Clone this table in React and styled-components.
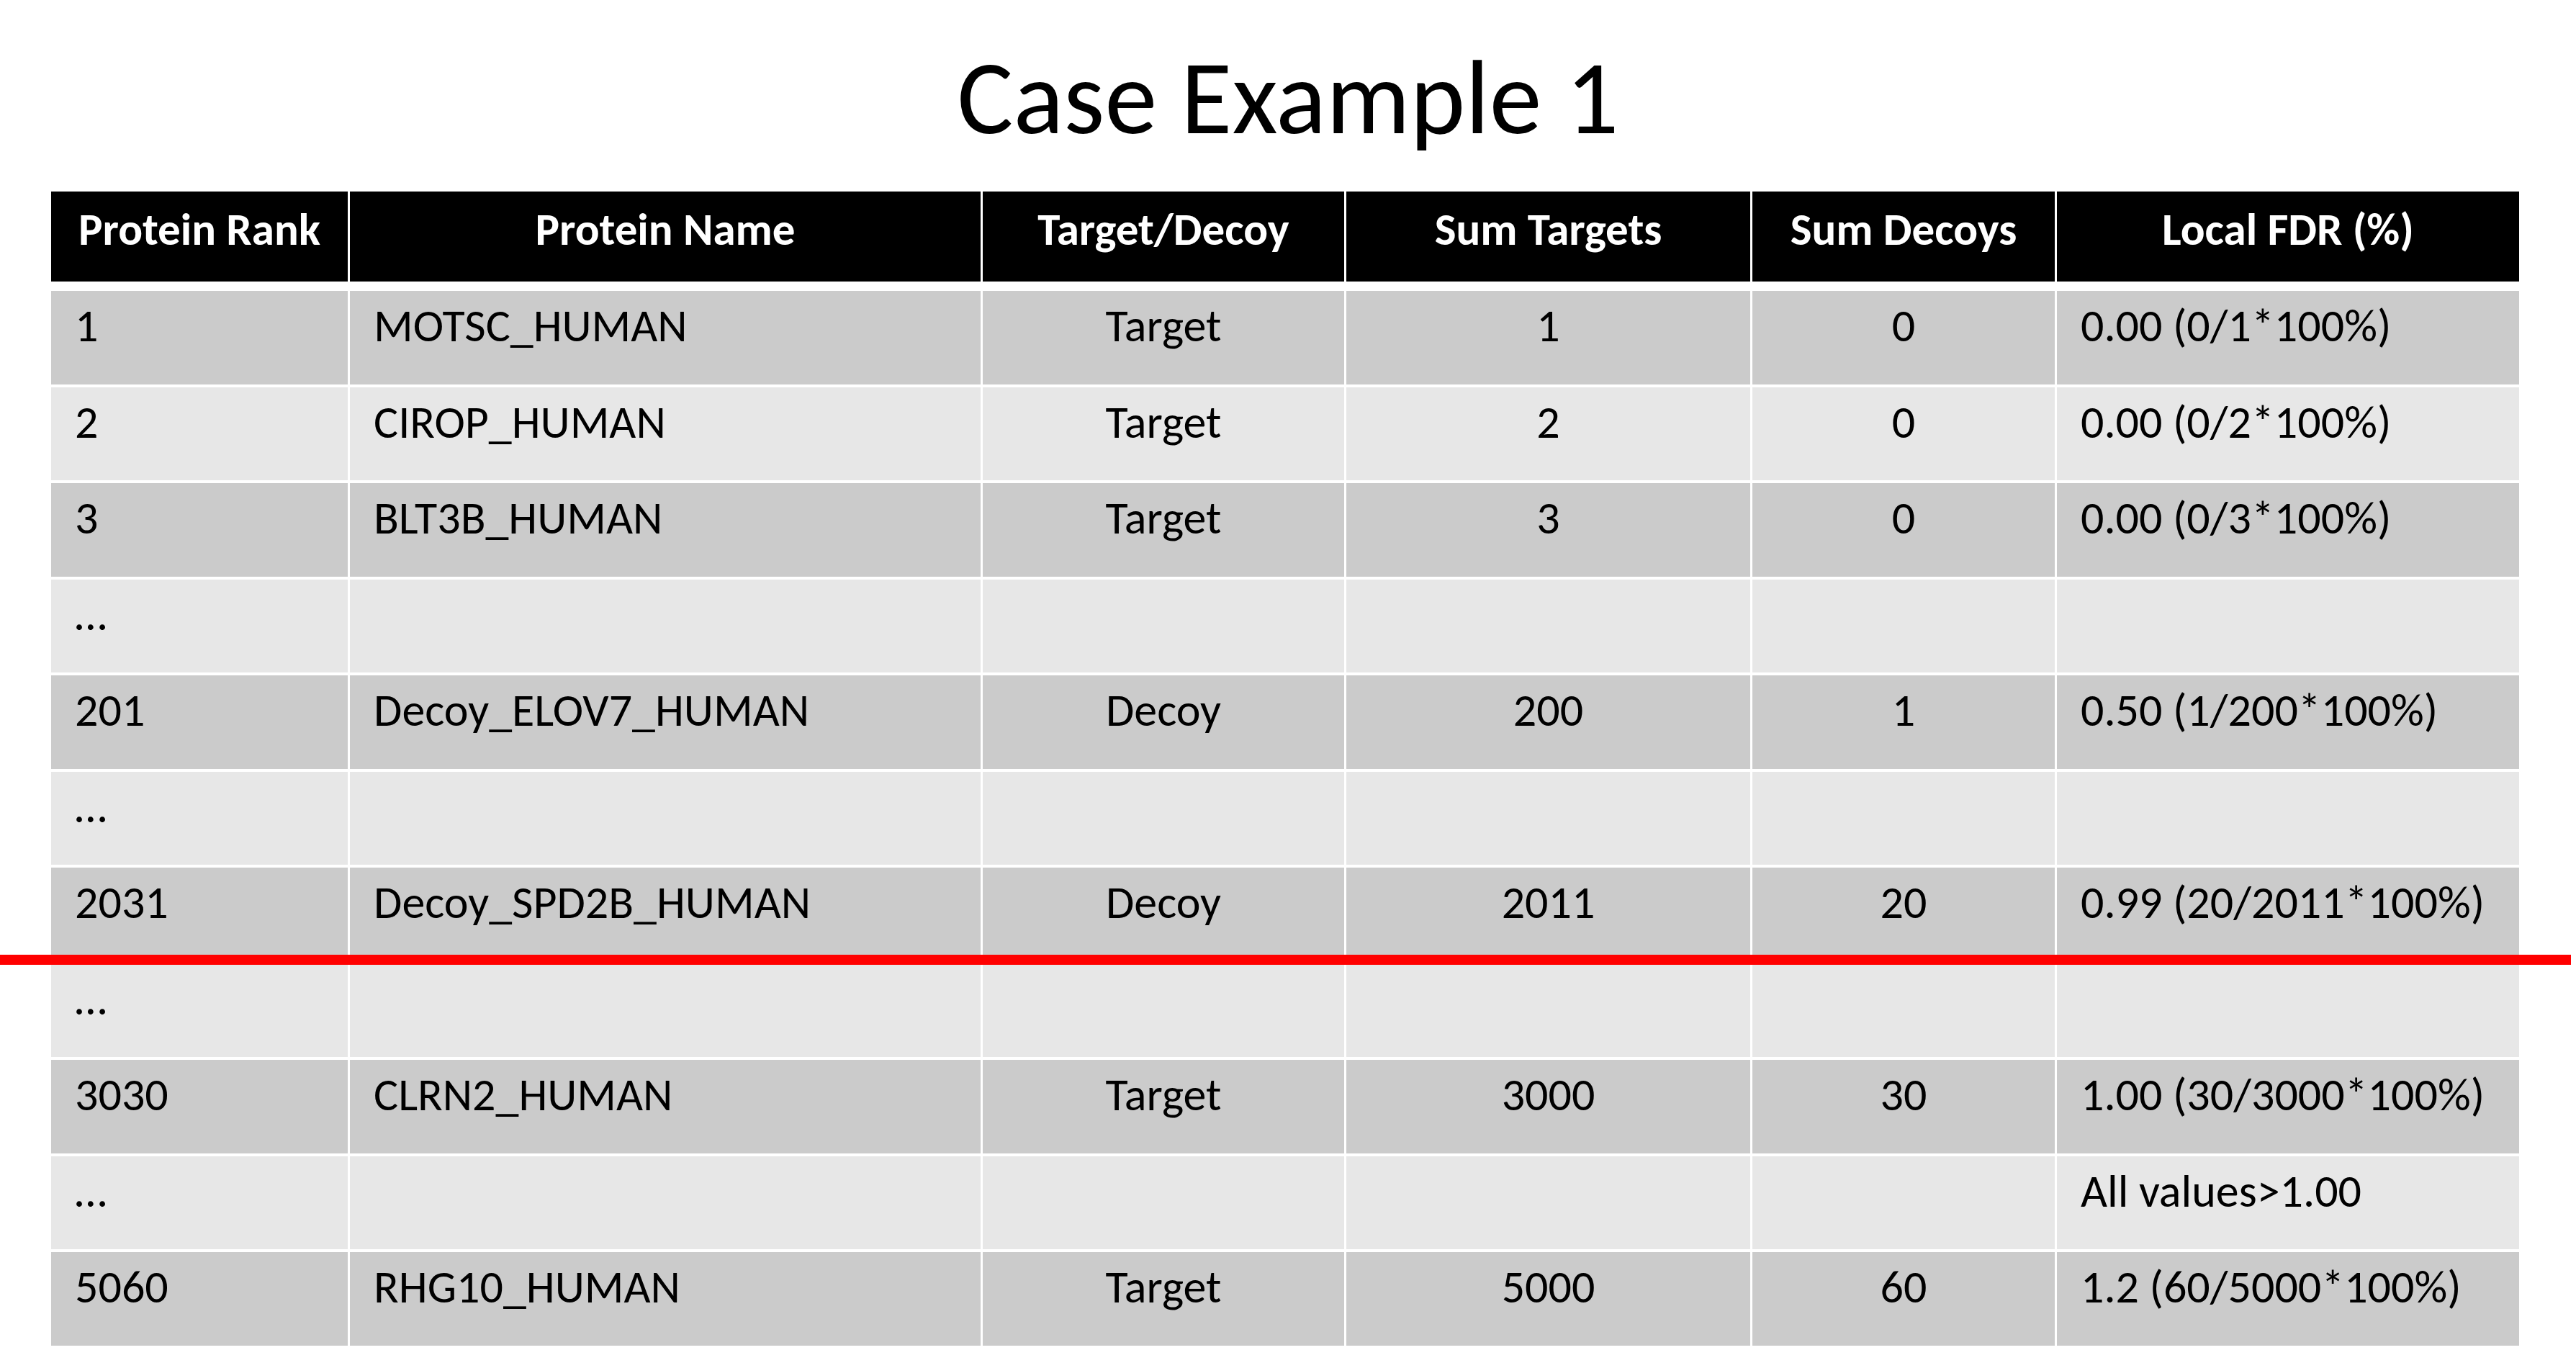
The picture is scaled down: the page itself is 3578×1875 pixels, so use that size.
import styled, { createGlobalStyle } from "styled-components";

const GlobalStyle = createGlobalStyle`
  html, body {
    margin: 0;
    padding: 0;
    background: #ffffff;
  }
  body {
    font-family: "Carlito", "Lato", sans-serif;
    color: #000000;
  }
`;

const COLUMNS = "412px 876px 502px 561px 420px 642px";

const rows = [
  ["1", "MOTSC_HUMAN", "Target", "1", "0", "0.00 (0/1*100%)"],
  ["2", "CIROP_HUMAN", "Target", "2", "0", "0.00 (0/2*100%)"],
  ["3", "BLT3B_HUMAN", "Target", "3", "0", "0.00 (0/3*100%)"],
  ["…", "", "", "", "", ""],
  ["201", "Decoy_ELOV7_HUMAN", "Decoy", "200", "1", "0.50 (1/200*100%)"],
  ["…", "", "", "", "", ""],
  ["2031", "Decoy_SPD2B_HUMAN", "Decoy", "2011", "20", "0.99 (20/2011*100%)"],
  ["…", "", "", "", "", ""],
  ["3030", "CLRN2_HUMAN", "Target", "3000", "30", "1.00 (30/3000*100%)"],
  ["…", "", "", "", "", "All values>1.00"],
  ["5060", "RHG10_HUMAN", "Target", "5000", "60", "1.2 (60/5000*100%)"],
];

const headers = ["Protein Rank", "Protein Name", "Target/Decoy", "Sum Targets", "Sum Decoys", "Local FDR (%)"];
const align = ["left", "left", "center", "center", "center", "left"];

export default function App() {
  return (
    <>
      <GlobalStyle />
      <Slide>
        <Title>Case Example 1</Title>
        <Table>
          <HeaderRow>
            {headers.map((h) => (
              <HeadCell key={h}>{h}</HeadCell>
            ))}
          </HeaderRow>
          <Body>
            {rows.map((row, i) =>
              row.map((value, j) => (
                <Cell key={`${i}-${j}`} $band={i % 2 === 0} $align={align[j]}>
                  {value}
                </Cell>
              ))
            )}
            <Cutoff />
          </Body>
        </Table>
      </Slide>
    </>
  );
}

const Slide = styled.div`
  width: 3578px;
  height: 1875px;
  overflow: hidden;
  background: #ffffff;
`;

const Title = styled.h1`
  margin: 0;
  padding-top: 48px;
  height: 266px;
  box-sizing: border-box;
  text-align: center;
  font-size: 146px;
  font-weight: 400;
  line-height: 1.2;
`;

const Table = styled.div`
  margin-left: 71px;
  width: 3428px;
`;

const HeaderRow = styled.div`
  display: grid;
  grid-template-columns: ${COLUMNS};
  column-gap: 3px;
  height: 125px;
  margin-bottom: 13px;
`;

const HeadCell = styled.div`
  background: #000000;
  color: #ffffff;
  font-weight: 700;
  font-size: 63px;
  line-height: 1.2;
  text-align: center;
  padding-top: 15px;
  box-sizing: border-box;
  white-space: nowrap;
`;

const Body = styled.div`
  position: relative;
  display: grid;
  grid-template-columns: ${COLUMNS};
  grid-auto-rows: 129.5px;
  column-gap: 3px;
  row-gap: 4px;
`;

const Cell = styled.div`
  background: ${(p) => (p.$band ? "#cbcbcb" : "#e7e7e7")};
  text-align: ${(p) => p.$align};
  font-size: 64px;
  line-height: 1.2;
  padding: 10px 33px 0;
  box-sizing: border-box;
  white-space: nowrap;
`;

const Cutoff = styled.div`
  position: absolute;
  top: 922px;
  left: -71px;
  width: 3571px;
  height: 14px;
  background: #ff0000;
`;
